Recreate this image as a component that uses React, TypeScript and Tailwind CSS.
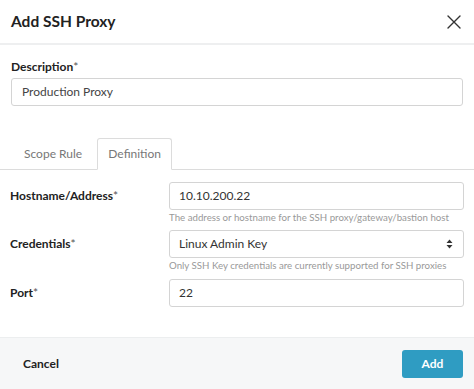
import React from "react";

export default function App() {
  return (
    <div
      className="w-[474px] h-[389px] bg-white flex flex-col overflow-hidden"
      style={{ fontFamily: "Lato, 'Open Sans', sans-serif" }}
    >
      <div className="h-[43px] flex items-center justify-between pl-[11px] pr-[13px] shrink-0">
        <div className="text-[15.5px] font-bold text-[#222] pt-[1px]">Add SSH Proxy</div>
        <svg width="14" height="14" viewBox="0 0 14 14" className="text-[#333]">
          <path d="M1 1 L13 13 M13 1 L1 13" stroke="currentColor" strokeWidth="1.4" strokeLinecap="round" />
        </svg>
      </div>
      <div className="h-[2px] bg-[#eeeff0] shrink-0" />
      <div className="flex-1 flex flex-col">
        <div className="px-[11px] pt-[14px]">
          <div className="text-[12px] font-bold text-[#222] leading-[16px]">
            Description<span className="font-normal text-[#555]">*</span>
          </div>
          <div className="mt-[3px] h-[28px] border border-[#d4d4d4] rounded-[3px] flex items-center px-[10px] text-[12px] text-[#444]">
            Production Proxy
          </div>
        </div>
        <div className="mt-[32px] flex items-end border-b border-[#dcdcdc] h-[32px] pl-[11px]">
          <div className="pl-[13px] pr-[15px] h-[31px] flex items-center text-[12px] text-[#777]">Scope Rule</div>
          <div className="w-[75px] h-[32px] -mb-px border border-[#dcdcdc] border-b-white rounded-t-[3px] bg-white flex items-center justify-center text-[12px] text-[#777]">
            Definition
          </div>
        </div>
        <div className="px-[10px] pt-[12px] flex flex-col">
          <div className="flex">
            <div className="w-[159px] shrink-0 h-[28px] flex items-center text-[12px] font-bold text-[#222]">
              Hostname/Address<span className="font-normal text-[#555]">*</span>
            </div>
            <div className="flex-1 min-w-0 flex flex-col">
              <div className="h-[28px] border border-[#d4d4d4] rounded-[3px] flex items-center px-[9px] text-[12px] text-[#333]">
                10.10.200.22
              </div>
              <div className="text-[9.7px] text-[#999] leading-[14px] whitespace-nowrap">
                The address or hostname for the SSH proxy/gateway/bastion host
              </div>
            </div>
          </div>
          <div className="flex mt-[6px]">
            <div className="w-[159px] shrink-0 h-[28px] flex items-center text-[12px] font-bold text-[#222]">
              Credentials<span className="font-normal text-[#555]">*</span>
            </div>
            <div className="flex-1 min-w-0 flex flex-col">
              <div className="h-[28px] border border-[#d4d4d4] rounded-[3px] flex items-center justify-between pl-[9px] pr-[10px] text-[12px] text-[#333]">
                <span>Linux Admin Key</span>
                <svg width="7" height="10" viewBox="0 0 7 10">
                  <path d="M3.5 0.5 L6.5 4 L0.5 4 Z M3.5 9.5 L6.5 6 L0.5 6 Z" fill="#333" />
                </svg>
              </div>
              <div className="text-[9.7px] text-[#999] leading-[14px] whitespace-nowrap">
                Only SSH Key credentials are currently supported for SSH proxies
              </div>
            </div>
          </div>
          <div className="flex mt-[7px]">
            <div className="w-[159px] shrink-0 h-[28px] flex items-center text-[12px] font-bold text-[#222]">
              Port<span className="font-normal text-[#555]">*</span>
            </div>
            <div className="flex-1 min-w-0 h-[28px] border border-[#d4d4d4] rounded-[3px] flex items-center px-[9px] text-[12px] text-[#333]">
              22
            </div>
          </div>
        </div>
      </div>
      <div className="h-[52px] shrink-0 bg-[#f6f7f8] border-t border-[#eceeef] flex items-center justify-between pl-[23px] pr-[11px]">
        <div className="text-[12px] font-bold text-[#222]">Cancel</div>
        <div className="w-[61px] h-[28px] rounded-[3px] bg-[#2f9cc2] flex items-center justify-center text-[12px] font-bold text-white">
          Add
        </div>
      </div>
    </div>
  );
}
